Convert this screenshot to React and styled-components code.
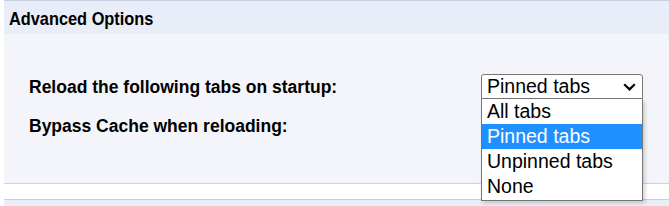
import React from "react";
import styled, { createGlobalStyle } from "styled-components";

const GlobalStyle = createGlobalStyle`
  body {
    margin: 0;
    background: #ffffff;
    font-family: "Liberation Sans", Arial, sans-serif;
    color: #000;
  }
`;

const Section = styled.section`
  margin-left: 4px;
  border-top: 1px solid #c6d0e2;
`;

const Header = styled.div`
  height: 33px;
  background: #e8edf8;
  display: flex;
  align-items: center;
  padding-left: 5px;
`;

const Title = styled.h2`
  margin: 0;
  padding-top: 3px;
  font-size: 19px;
  font-weight: bold;
  transform: scaleX(0.86);
  transform-origin: left center;
  white-space: nowrap;
`;

const Body = styled.div`
  background: #f3f5fa;
  padding: 40px 0 47px 25px;
  border-bottom: 1px solid #d4d4d4;
  display: grid;
  grid-template-columns: 452px 162px;
  row-gap: 17px;
  align-items: center;
`;

const Label = styled.div`
  font-size: 17.5px;
  font-weight: bold;
  line-height: 20px;
`;

const Spacer = styled.div`
  height: 15px;
`;

const SelectBox = styled.div`
  position: relative;
  height: 25px;
  box-sizing: border-box;
  border: 1px solid #767676;
  border-radius: 3px 3px 0 0;
  background: #fff;
  font-size: 19.5px;
  line-height: 23px;
  padding-left: 5px;
  display: flex;
  align-items: center;
  justify-content: space-between;
  padding-right: 6px;
`;

const Chevron = styled.svg`
  width: 13px;
  height: 8px;
`;

const List = styled.ul`
  position: absolute;
  left: -1px;
  top: calc(100% + 1px);
  width: 162px;
  box-sizing: border-box;
  margin: 0;
  padding: 0 0 1px;
  list-style: none;
  background: #fff;
  border: 1px solid #767676;
  border-top: none;
  box-shadow: 2px 2px 4px rgba(0, 0, 0, 0.18);
  z-index: 2;
`;

const Option = styled.li`
  height: 25px;
  line-height: 25px;
  padding-left: 5px;
  font-size: 19.5px;
  background: ${(p) => (p.selected ? "#1e90ff" : "#fff")};
  color: ${(p) => (p.selected ? "#fff" : "#000")};
`;

const options = ["All tabs", "Pinned tabs", "Unpinned tabs", "None"];

export default function App() {
  const current = "Pinned tabs";
  return (
    <>
      <GlobalStyle />
      <Section>
        <Header>
          <Title>Advanced Options</Title>
        </Header>
        <Body>
          <Label>Reload the following tabs on startup:</Label>
          <SelectBox>
            <span>{current}</span>
            <Chevron viewBox="0 0 13 8">
              <path
                d="M1.2 1.2 L6.5 6.4 L11.8 1.2"
                fill="none"
                stroke="#000"
                strokeWidth="2.2"
              />
            </Chevron>
            <List>
              {options.map((o) => (
                <Option key={o} selected={o === current}>
                  {o}
                </Option>
              ))}
            </List>
          </SelectBox>
          <Label>Bypass Cache when reloading:</Label>
          <div />
        </Body>
      </Section>
      <Spacer />
      <Section>
        <Header />
      </Section>
    </>
  );
}
